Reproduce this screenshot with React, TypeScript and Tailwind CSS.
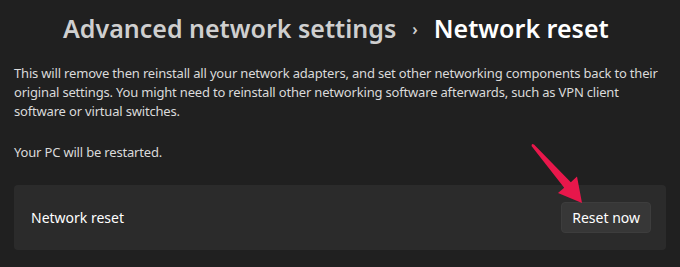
import React from 'react';

function Arrow() {
  return (
    <svg
      className="absolute left-[525px] top-[140px]"
      width="65"
      height="70"
      viewBox="0 0 65 70"
    >
      <polygon
        points="7,4 9,4.5 45.8,42.2 52,36.5 57,63 33,53 39.2,47.8 6.5,6"
        fill="#e8174b"
        strokeLinejoin="round"
      />
    </svg>
  );
}

export default function App() {
  return (
    <div
      className="relative w-[680px] h-[267px] overflow-hidden bg-[#202020] text-white"
      style={{ fontFamily: '"Noto Sans", "Open Sans", sans-serif' }}
    >
      <div className="flex items-center h-[58px] pl-[63px] text-[25px] font-semibold">
        <span className="text-[#cfcfcf]">Advanced network settings</span>
        <span className="mx-[16px] text-[16px] text-[#cfcfcf]">›</span>
        <span className="text-white">Network reset</span>
      </div>

      <div className="pt-[6px] px-[14px] text-[13px] leading-[19px] tracking-[-0.18px] text-[#dadada]">
        <p>
          This will remove then reinstall all your network adapters, and set other networking components back to their
          original settings. You might need to reinstall other networking software afterwards, such as VPN client
          software or virtual switches.
        </p>
        <p className="mt-[22px]">Your PC will be restarted.</p>
      </div>

      <div className="mx-[14px] mt-[23px] w-[652px] h-[65px] rounded-[4px] bg-[#2b2b2b] flex items-center justify-between pl-[17px] pr-[15px]">
        <span className="text-[14px] text-white">Network reset</span>
        <button className="h-[31px] px-[10px] rounded-[4px] bg-[#373737] border border-[#3d3d3d] text-[14px] text-white">
          Reset now
        </button>
      </div>

      <Arrow />
    </div>
  );
}
